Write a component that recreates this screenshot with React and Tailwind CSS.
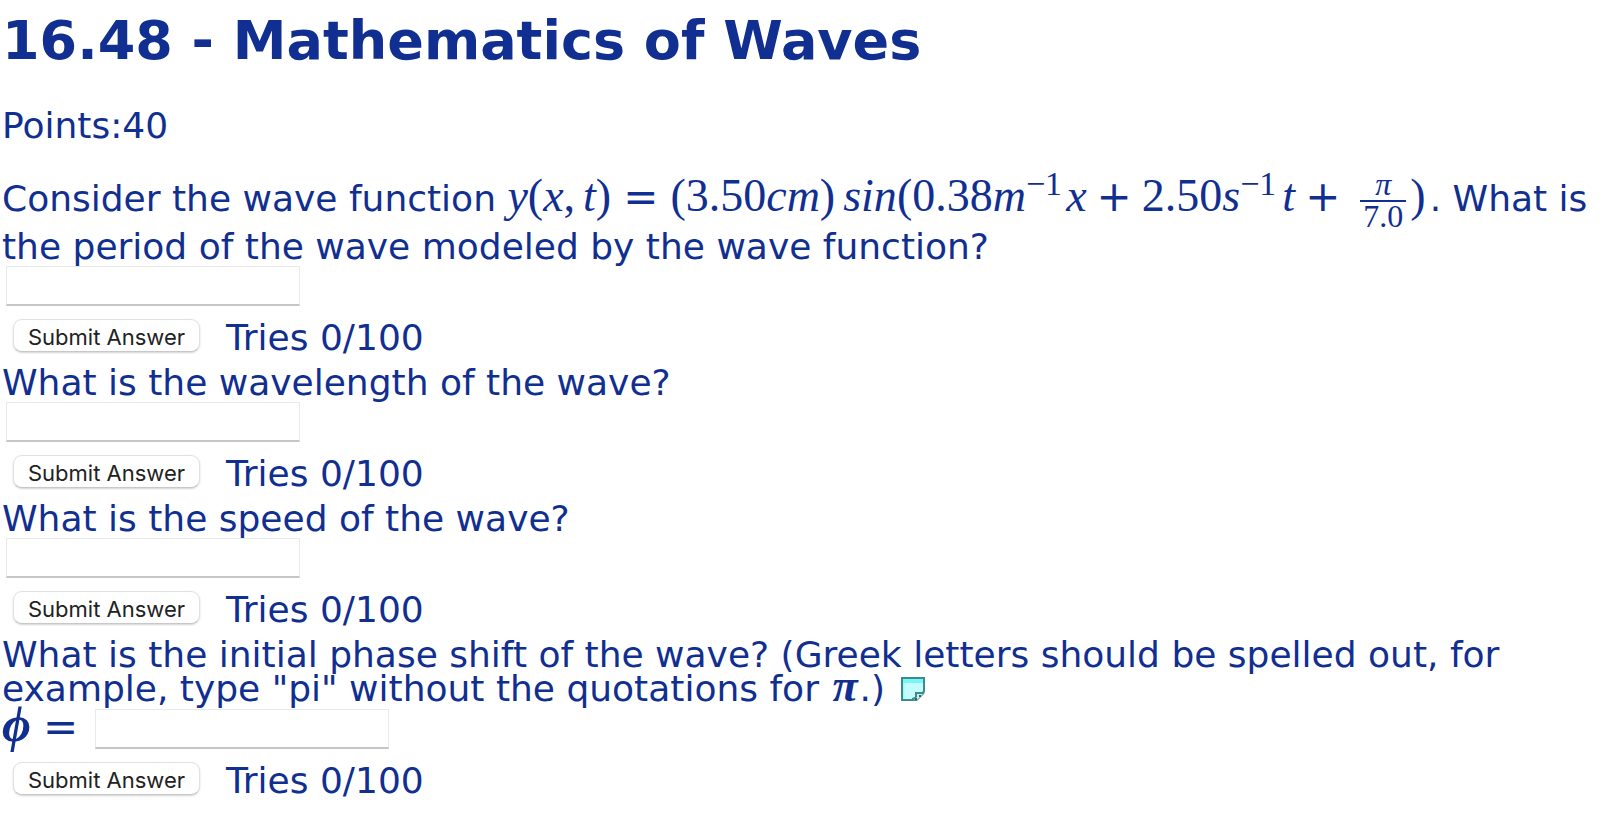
import React from "react";

function Sup({ children }) {
  return <span className="align-[16px] text-[34px] leading-[0]">{children}</span>;
}

function Plus() {
  return <span className="mx-[10px] font-['DejaVu_Sans',sans-serif] text-[42px] leading-[0]">+</span>;
}

function Equals({ className }) {
  return <span className={`font-['DejaVu_Sans',sans-serif] text-[42px] leading-[0] ${className}`}>=</span>;
}

function WaveFunction() {
  return (
    <span className="mr-1 inline-block whitespace-nowrap font-['Liberation_Serif',serif] text-[46px] leading-[36px]">
      <i>y</i>(<i>x</i>,<i className="ml-2">t</i>)<Equals className="mx-3" />
      (3.50<i>cm</i>)<i className="ml-2">sin</i>(0.38<i>m</i>
      <Sup>−1</Sup>
      <i className="ml-1">x</i>
      <Plus />2.50<i>s</i>
      <Sup>−1</Sup>
      <i className="ml-[6px]">t</i>
      <Plus />
      <span className="mr-1 ml-[10px] inline-flex flex-col items-center align-[16px] text-[32px]">
        <i className="px-3 pb-1 leading-[24px]">π</i>
        <span className="border-t-2 border-current px-[3px] leading-[28px]">7.0</span>
      </span>
      )
    </span>
  );
}

function NoteIcon() {
  return (
    <svg className="ml-4 inline-block h-6 w-6 align-baseline" viewBox="0 0 24 24" aria-hidden="true">
      <path d="M0 0H24V15L15 24H0Z" fill="#3d8c8c" />
      <path d="M2 2H22V14L14 22H2Z" fill="#c4fcfd" />
      <path d="M2 2H22V6H2Z" fill="#74f6fa" />
      <path d="M2 6H3.500V22H2Z" fill="#9af9fb" />
      <path d="M14 15H22L24 17L17 24H11V21L14 20Z" fill="#3d8c8c" />
      <path d="M16 17H22L16 23H13L16 20Z" fill="#d5e6e6" />
      <path d="M18 18H20V20H18ZM14 21H16V23H14Z" fill="#27666a" />
      <path d="M24 16V24H16Z" fill="#fff" />
    </svg>
  );
}

function AnswerInput({ id, label }) {
  return (
    <input
      id={id}
      type="text"
      aria-label={label}
      className="block h-10 w-[294px] border border-b-2 border-[#e9e9e9] border-b-[#c6c6c6] bg-transparent px-2 text-2xl outline-none"
    />
  );
}

function SubmitRow() {
  return (
    <div className="flex h-[33px] items-center gap-[26px] pl-[11px]">
      <button
        type="submit"
        className="h-[33px] rounded-[9px] border border-[#e2e2e2] border-b-[#c8c8c8] bg-white px-[14px] pt-[3px] font-['Inter',sans-serif] text-[22px] leading-[28px] text-[#222] shadow-[0_1px_2px_rgba(0,0,0,0.18)]"
      >
        Submit Answer
      </button>
      <span className="pt-1">Tries 0/100</span>
    </div>
  );
}

function Question({ id, label, children }) {
  return (
    <form className="mb-[14px]" onSubmit={(e) => e.preventDefault()}>
      <p>{children}</p>
      <div className="mt-[2px] mb-[13px] pl-1">
        <AnswerInput id={id} label={label} />
      </div>
      <SubmitRow />
    </form>
  );
}

export default function App() {
  return (
    <main className="min-h-screen bg-white pt-2 pl-[2px] font-['DejaVu_Sans',Verdana,sans-serif] text-[36px] leading-[34px] text-[#112f91]">
      <h1 className="text-[54px] leading-[66px] font-bold">16.48 - Mathematics of Waves</h1>
      <p className="mt-[35px] mb-[29px]">Points:40</p>
      <Question id="period" label="Period of the wave">
        Consider the wave function <WaveFunction />. What is the period of the wave modeled by the wave function?
      </Question>
      <Question id="wavelength" label="Wavelength of the wave">
        What is the wavelength of the wave?
      </Question>
      <Question id="speed" label="Speed of the wave">
        What is the speed of the wave?
      </Question>
      <form onSubmit={(e) => e.preventDefault()}>
        <p>
          What is the initial phase shift of the wave? (Greek letters should be spelled out, for example, type "pi"
          without the quotations for{" "}
          <i className="mx-[2px] font-['Liberation_Serif',serif] text-[46px] leading-[0] font-bold">π</i>.)
          <NoteIcon />
        </p>
        <div className="mt-[3px] mb-[13px] flex h-10 items-start gap-[17px]">
          <label htmlFor="phase" className="font-['Liberation_Serif',serif] text-[50px] leading-[30px]">
            <i className="font-bold">ϕ</i>
            <Equals className="ml-3" />
          </label>
          <AnswerInput id="phase" label="Initial phase shift" />
        </div>
        <SubmitRow />
      </form>
    </main>
  );
}
